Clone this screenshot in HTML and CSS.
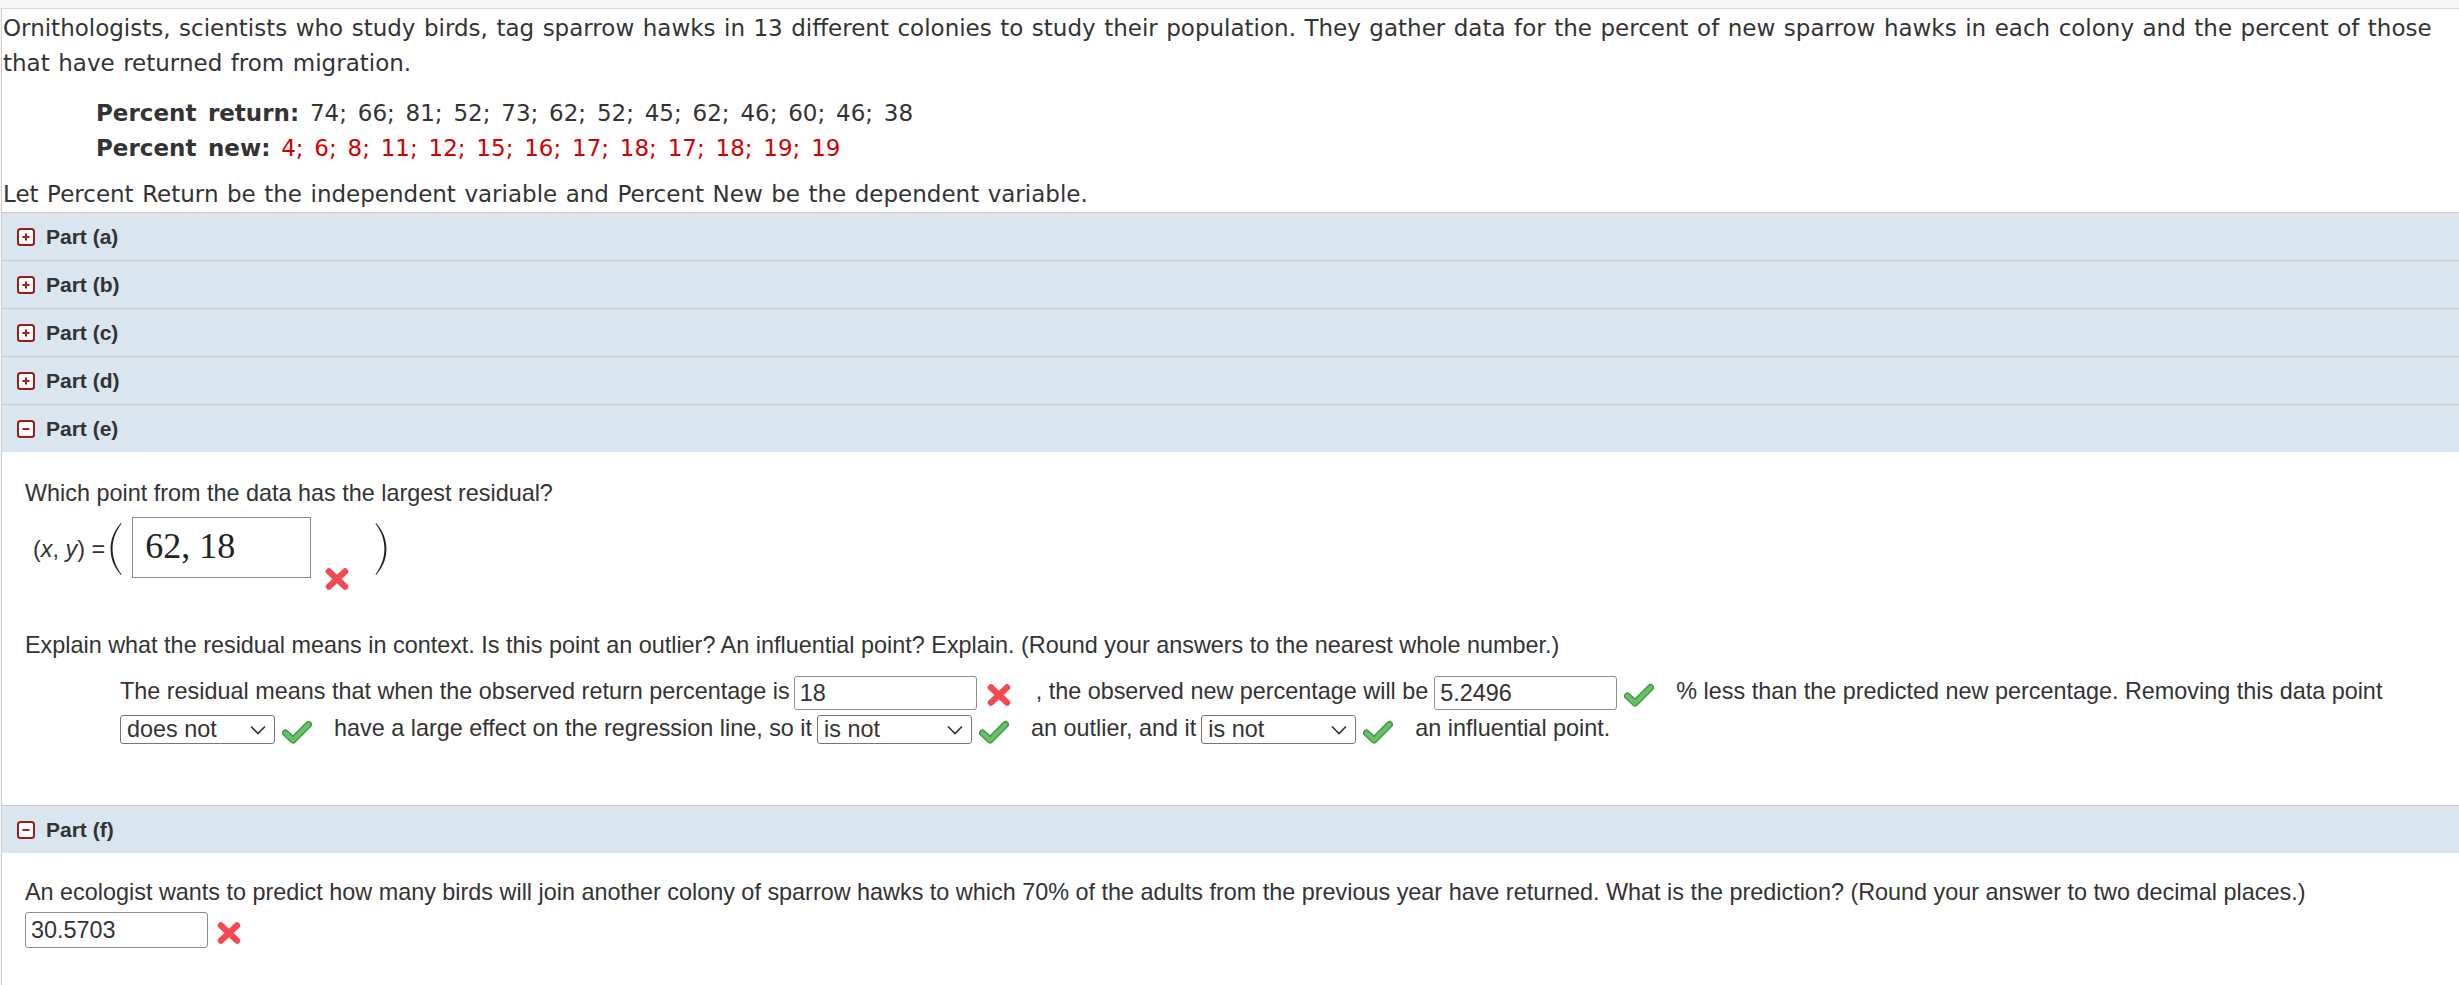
FILE: index.html
```html
<!DOCTYPE html>
<html>
<head>
<meta charset="utf-8">
<link rel="stylesheet" href="styles.css">
</head>
<body>
<div class="page">
  <section class="intro">
    <p class="line">Ornithologists, scientists who study birds, tag sparrow hawks in 13 different colonies to study their population. They gather data for the percent of new sparrow hawks in each colony and the percent of those that have returned from migration.</p>
    <div class="data">
      <div><b>Percent return:</b> 74; 66; 81; 52; 73; 62; 52; 45; 62; 46; 60; 46; 38</div>
      <div><b>Percent new:</b> <span class="red">4; 6; 8; 11; 12; 15; 16; 17; 18; 17; 18; 19; 19</span></div>
    </div>
    <p class="line">Let Percent Return be the independent variable and Percent New be the dependent variable.</p>
  </section>

  <div class="part-head"><svg class="tog" viewBox="0 0 18 18"><rect x="1" y="1" width="16" height="16" rx="2.5" fill="#fff" stroke="#9a1b1b" stroke-width="2"/><path d="M9 5.5v7M5.5 9h7" stroke="#a82020" stroke-width="2"/></svg><span>Part (a)</span></div>
  <div class="part-head"><svg class="tog" viewBox="0 0 18 18"><rect x="1" y="1" width="16" height="16" rx="2.5" fill="#fff" stroke="#9a1b1b" stroke-width="2"/><path d="M9 5.5v7M5.5 9h7" stroke="#a82020" stroke-width="2"/></svg><span>Part (b)</span></div>
  <div class="part-head"><svg class="tog" viewBox="0 0 18 18"><rect x="1" y="1" width="16" height="16" rx="2.5" fill="#fff" stroke="#9a1b1b" stroke-width="2"/><path d="M9 5.5v7M5.5 9h7" stroke="#a82020" stroke-width="2"/></svg><span>Part (c)</span></div>
  <div class="part-head"><svg class="tog" viewBox="0 0 18 18"><rect x="1" y="1" width="16" height="16" rx="2.5" fill="#fff" stroke="#9a1b1b" stroke-width="2"/><path d="M9 5.5v7M5.5 9h7" stroke="#a82020" stroke-width="2"/></svg><span>Part (d)</span></div>
  <div class="part-head"><svg class="tog" viewBox="0 0 18 18"><rect x="1" y="1" width="16" height="16" rx="2.5" fill="#fff" stroke="#9a1b1b" stroke-width="2"/><path d="M5.5 9h7" stroke="#a82020" stroke-width="2"/></svg><span>Part (e)</span></div>

  <div class="part-body part-e">
    <p class="prompt">Which point from the data has the largest residual?</p>
    <div class="xy">
      <span class="xy-label">(<i>x</i>, <i>y</i>) =</span>
      <svg class="paren" viewBox="0 0 12 52"><path d="M11.6 0.6 C4.5 10 2.6 19 2.6 26 C2.6 33 4.5 42 11.6 51.4 L10.9 52 C2.2 42 0.6 33 0.6 26 C0.6 19 2.2 10 10.9 0 Z" fill="#222"/></svg>
      <span class="mathbox">62, 18</span>
      <svg class="xmark big" viewBox="0 0 26 24"><path d="M5 4.5 L21 19.5 M21 4.5 L5 19.5" stroke="#f24a52" stroke-width="6.5" stroke-linecap="round"/></svg>
      <svg class="paren close" viewBox="0 0 12 52"><path d="M0.4 0.6 C7.5 10 9.4 19 9.4 26 C9.4 33 7.5 42 0.4 51.4 L1.1 52 C9.8 42 11.4 33 11.4 26 C11.4 19 9.8 10 1.1 0 Z" fill="#222"/></svg>
    </div>
    <p class="prompt explain">Explain what the residual means in context. Is this point an outlier? An influential point? Explain. (Round your answers to the nearest whole number.)</p>
    <div class="fill">The residual means that when the observed return percentage is<span class="inp inp-a">18</span><svg class="ic" viewBox="0 0 30 24"><path d="M7 4.5 L23 19.5 M23 4.5 L7 19.5" stroke="#f24a52" stroke-width="6.5" stroke-linecap="round"/></svg>, the observed new percentage will be<span class="inp inp-b">5.2496</span><svg class="ic" viewBox="0 0 30 24"><path d="M3.5 13 L11 20 L26.5 4.5" fill="none" stroke="#3f9a3f" stroke-width="7" stroke-linejoin="round" stroke-linecap="round"/><path d="M3.5 13 L11 20 L26.5 4.5" fill="none" stroke="#66c266" stroke-width="4.2" stroke-linejoin="round" stroke-linecap="round"/></svg>% less than the predicted new percentage. Removing this data point<span class="sel sel-start"><span>does not</span><svg class="chev" viewBox="0 0 16 10"><path d="M1 1.5 L8 8.5 L15 1.5" fill="none" stroke="#333" stroke-width="1.6"/></svg></span><svg class="ic" viewBox="0 0 30 24"><path d="M3.5 13 L11 20 L26.5 4.5" fill="none" stroke="#3f9a3f" stroke-width="7" stroke-linejoin="round" stroke-linecap="round"/><path d="M3.5 13 L11 20 L26.5 4.5" fill="none" stroke="#66c266" stroke-width="4.2" stroke-linejoin="round" stroke-linecap="round"/></svg>have a large effect on the regression line, so it<span class="sel"><span>is not</span><svg class="chev" viewBox="0 0 16 10"><path d="M1 1.5 L8 8.5 L15 1.5" fill="none" stroke="#333" stroke-width="1.6"/></svg></span><svg class="ic" viewBox="0 0 30 24"><path d="M3.5 13 L11 20 L26.5 4.5" fill="none" stroke="#3f9a3f" stroke-width="7" stroke-linejoin="round" stroke-linecap="round"/><path d="M3.5 13 L11 20 L26.5 4.5" fill="none" stroke="#66c266" stroke-width="4.2" stroke-linejoin="round" stroke-linecap="round"/></svg>an outlier, and it<span class="sel"><span>is not</span><svg class="chev" viewBox="0 0 16 10"><path d="M1 1.5 L8 8.5 L15 1.5" fill="none" stroke="#333" stroke-width="1.6"/></svg></span><svg class="ic" viewBox="0 0 30 24"><path d="M3.5 13 L11 20 L26.5 4.5" fill="none" stroke="#3f9a3f" stroke-width="7" stroke-linejoin="round" stroke-linecap="round"/><path d="M3.5 13 L11 20 L26.5 4.5" fill="none" stroke="#66c266" stroke-width="4.2" stroke-linejoin="round" stroke-linecap="round"/></svg>an influential point.</div>
  </div>

  <div class="part-head"><svg class="tog" viewBox="0 0 18 18"><rect x="1" y="1" width="16" height="16" rx="2.5" fill="#fff" stroke="#9a1b1b" stroke-width="2"/><path d="M5.5 9h7" stroke="#a82020" stroke-width="2"/></svg><span>Part (f)</span></div>

  <div class="part-body part-f">
    <p class="prompt">An ecologist wants to predict how many birds will join another colony of sparrow hawks to which 70% of the adults from the previous year have returned. What is the prediction? (Round your answer to two decimal places.)</p>
    <div class="answer-row"><span class="inp inp-f">30.5703</span><svg class="xmark" viewBox="0 0 26 24"><path d="M5 4.5 L21 19.5 M21 4.5 L5 19.5" stroke="#f24a52" stroke-width="6.5" stroke-linecap="round"/></svg></div>
  </div>
</div>
</body>
</html>
```

FILE: styles.css
```css
html, body {
  margin: 0;
}

body {
  background: #f6f6f6;
  padding: 8px 0 0 1px;
  font-family: "Liberation Sans", Arial, sans-serif;
  color: #333;
}

.page {
  background: #fff;
  border-left: 1px solid #d0d0d0;
  border-top: 1px solid #dcdcdc;
  min-height: 980px;
}

.intro {
  font-family: "DejaVu Sans", Verdana, sans-serif;
  font-size: 23px;
  line-height: 35px;
  word-spacing: 1.2px;
  padding: 2px 0 0 1px;
}

.intro p {
  margin: 0;
}

.data {
  margin: 15px 0 11px;
  padding-left: 93px;
  word-spacing: 3.5px;
}

.red {
  color: #d40000;
}

.part-head {
  display: flex;
  align-items: center;
  height: 47px;
  border-top: 1px solid #cacaca;
  background: #d9e5ef;
  padding-left: 15px;
  font-size: 21px;
  font-weight: bold;
  color: #333;
}

.tog {
  width: 18px;
  height: 18px;
  margin-right: 11px;
  flex: none;
}

.part-body {
  padding-left: 23px;
  font-size: 23.4px;
}

.part-e {
  padding-top: 26px;
  padding-bottom: 58px;
}

.part-f {
  padding-top: 24px;
  padding-bottom: 20px;
}

.prompt {
  margin: 0;
  line-height: 30px;
}

.xy {
  display: flex;
  align-items: flex-start;
  margin-top: 9px;
  padding-left: 8px;
  height: 61px;
}

.xy-label {
  line-height: 61px;
  padding-top: 2px;
}

.paren {
  width: 12px;
  height: 52px;
  margin-top: 6px;
  margin-left: 5px;
  flex: none;
}

.paren.close {
  margin-left: 25px;
}

.mathbox {
  box-sizing: border-box;
  width: 179px;
  height: 61px;
  margin-left: 10px;
  border: 1px solid #8a8a8a;
  padding-left: 12px;
  font-family: "Liberation Serif", "Times New Roman", serif;
  font-size: 36px;
  line-height: 57px;
  color: #222;
}

.xmark {
  width: 26px;
  height: 24px;
  flex: none;
}

.xmark.big {
  margin-left: 13px;
  margin-top: 50px;
}

.explain {
  margin-top: 52px;
}

.fill {
  margin-top: 13px;
  padding-left: 95px;
  line-height: 37px;
}

.inp {
  display: inline-block;
  box-sizing: border-box;
  width: 183px;
  height: 34px;
  border: 1px solid #8e8e8e;
  border-radius: 3px;
  padding: 0 5px;
  line-height: 32px;
  vertical-align: middle;
}

.inp-a {
  margin-left: 4px;
}

.inp-b {
  margin-left: 6px;
}

.ic {
  display: inline-block;
  width: 30px;
  height: 24px;
  margin: 0 22px 0 7px;
  vertical-align: middle;
  position: relative;
  top: 2px;
}

.sel {
  display: inline-flex;
  align-items: center;
  justify-content: space-between;
  box-sizing: border-box;
  width: 155px;
  height: 29px;
  margin-left: 5px;
  border: 1px solid #767676;
  border-radius: 3px;
  padding: 0 8px 0 6px;
  line-height: 27px;
  vertical-align: middle;
}

.sel-start {
  margin-left: 0;
}

.chev {
  width: 16px;
  height: 10px;
}

.answer-row {
  display: flex;
  align-items: flex-start;
  margin-top: 5px;
}

.inp-f {
  width: 183px;
  height: 36px;
  line-height: 34px;
}

.answer-row .xmark {
  margin-left: 8px;
  margin-top: 9px;
}
```
